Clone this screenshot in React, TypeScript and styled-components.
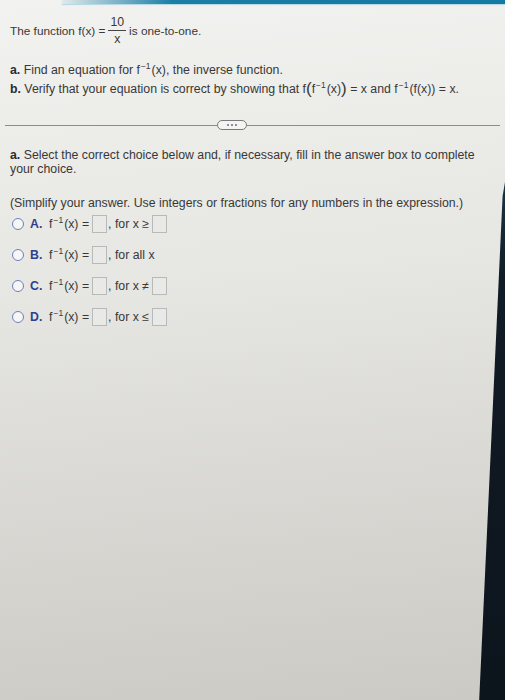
import * as React from "react";
import styled, { createGlobalStyle } from "styled-components";

const GlobalStyle = createGlobalStyle`
  html, body {
    margin: 0;
    padding: 0;
  }
  body {
    background: linear-gradient(175deg, #f2f2f0 0%, #e6e6e2 40%, #d4d3ce 80%, #cbcac5 100%);
    font-family: "Liberation Sans", Arial, sans-serif;
    color: #383838;
  }
`;

const Page = styled.div`
  position: relative;
  width: 505px;
  min-height: 700px;
  overflow: hidden;
`;

const TopBar = styled.div`
  height: 4px;
  margin-left: 62px;
  background: linear-gradient(90deg, rgba(23, 127, 166, 0.08) 0%, #1a7ea6 25%, #137aa3 100%);
  box-shadow: 0 1px 1px rgba(120, 190, 220, 0.5);
`;

const Content = styled.div`
  padding: 0 10px;
  font-size: 12.3px;
`;

const StatementRow = styled.div`
  display: flex;
  align-items: center;
  gap: 2px;
  height: 32px;
  margin-top: 11px;
  font-size: 11.8px;
`;

const Fraction = styled.span`
  display: inline-flex;
  flex-direction: column;
  align-items: center;
  margin: 0 1px;
  line-height: 13px;
  font-size: 12.3px;
`;

const FracTop = styled.span`
  padding: 0 2px 1px;
  border-bottom: 1px solid #444;
`;

const FracBottom = styled.span`
  padding-top: 2px;
`;

const Line = styled.div<{ $mt?: number; $lh?: number }>`
  margin-top: ${(p) => p.$mt ?? 0}px;
  line-height: ${(p) => p.$lh ?? 18}px;
`;

const Bold = styled.b`
  font-weight: bold;
  color: #2b2b2b;
`;

const Inv = styled.span`
  white-space: nowrap;
`;

const Sup = styled.sup`
  font-size: 8.5px;
  vertical-align: 5px;
  line-height: 0;
  margin: 0 1px 0 1px;
`;

const BigParen = styled.span`
  font-size: 17px;
  line-height: 1;
  vertical-align: -1px;
`;

const Divider = styled.div`
  display: flex;
  align-items: center;
  height: 10px;
  margin: 20px -5px 0;
`;

const Rule = styled.div<{ $flex: number }>`
  flex: ${(p) => p.$flex};
  height: 1px;
  background: #8c8c8c;
`;

const Pill = styled.div`
  display: flex;
  align-items: center;
  justify-content: center;
  gap: 2px;
  width: 28px;
  height: 8px;
  border: 1.5px solid #7a7a7a;
  border-radius: 6px;
  background: #f4f4f2;
`;

const Dot = styled.span`
  width: 2px;
  height: 2px;
  border-radius: 50%;
  background: #6a6a8a;
`;

const Para = styled.div<{ $mt: number }>`
  margin-top: ${(p) => p.$mt}px;
  line-height: 14px;
  max-width: 472px;
`;

const Options = styled.div`
  display: flex;
  flex-direction: column;
  gap: 11px;
  margin-top: 4px;
`;

const OptionRow = styled.div`
  display: flex;
  align-items: center;
  height: 20px;
  padding-left: 2px;
`;

const Radio = styled.span`
  width: 10px;
  height: 10px;
  border: 1.5px solid #6f7fbf;
  border-radius: 50%;
  background: #f6f6f4;
  margin-right: 6px;
`;

const Letter = styled.span`
  font-weight: bold;
  color: #2e3f8f;
  width: 19px;
`;

const AnswerBox = styled.span`
  display: inline-block;
  width: 13px;
  height: 16px;
  border: 1px solid #b9b9b9;
  background: #e9e9e7;
  margin: 0 1px 0 3px;
`;

const Bezel = styled.div`
  position: absolute;
  top: 0;
  right: 0;
  width: 30px;
  height: 700px;
  background: linear-gradient(180deg, #2d5b70 0%, #121c26 40%, #0c141c 100%);
  clip-path: polygon(100% 26%, 100% 100%, 14% 100%, 92% 28%);
`;

const F = () => (
  <Inv>
    f<Sup>−1</Sup>
  </Inv>
);

const choices: { letter: string; tail: string; box: boolean }[] = [
  { letter: "A.", tail: ", for x ≥", box: true },
  { letter: "B.", tail: ", for all x", box: false },
  { letter: "C.", tail: ", for x ≠", box: true },
  { letter: "D.", tail: ", for x ≤", box: true },
];

export default function App() {
  return (
    <Page>
      <GlobalStyle />
      <TopBar />
      <Content>
        <StatementRow>
          <span>The function f(x) =</span>
          <Fraction>
            <FracTop>10</FracTop>
            <FracBottom>x</FracBottom>
          </Fraction>
          <span>is one-to-one.</span>
        </StatementRow>

        <Line $mt={14}>
          <Bold>a.</Bold> Find an equation for <F />(x), the inverse function.
        </Line>
        <Line $lh={21}>
          <Bold>b.</Bold> Verify that your equation is correct by showing that f
          <BigParen>(</BigParen>
          <F />(x)<BigParen>)</BigParen> = x and <F />(f(x)) = x.
        </Line>

        <Divider>
          <Rule $flex={212} />
          <Pill>
            <Dot />
            <Dot />
            <Dot />
          </Pill>
          <Rule $flex={253} />
        </Divider>

        <Para $mt={18}>
          <Bold>a.</Bold> Select the correct choice below and, if necessary, fill in the answer box to complete
          your choice.
        </Para>
        <Para $mt={20}>(Simplify your answer. Use integers or fractions for any numbers in the expression.)</Para>

        <Options>
          {choices.map((c) => (
            <OptionRow key={c.letter}>
              <Radio />
              <Letter>{c.letter}</Letter>
              <span>
                <F />
                (x) =
              </span>
              <AnswerBox />
              <span>{c.tail}</span>
              {c.box && <AnswerBox />}
            </OptionRow>
          ))}
        </Options>
      </Content>
      <Bezel />
    </Page>
  );
}
